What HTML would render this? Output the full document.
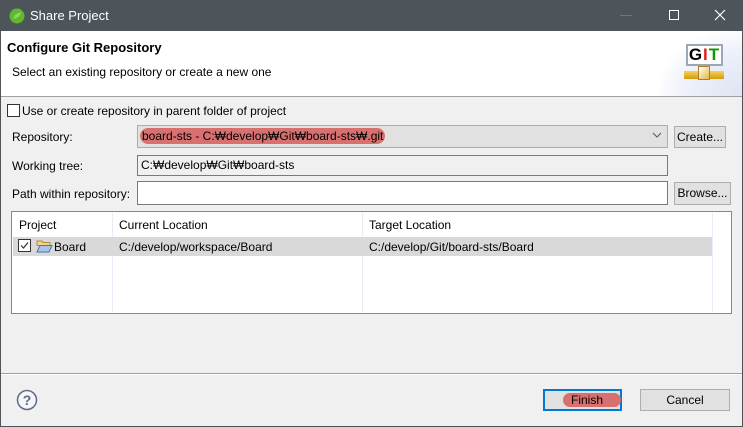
<!DOCTYPE html>
<html><head><meta charset="utf-8"><style>
*{margin:0;padding:0;box-sizing:border-box}
body{width:743px;height:427px;overflow:hidden;background:#f0f0f0;font-family:"Liberation Sans","Noto Sans CJK KR",sans-serif;font-size:12px;color:#000;position:relative}
.a{position:absolute;white-space:nowrap}
.win{position:absolute;left:0;top:0;width:743px;height:427px;border:1px solid #4d545a}
.btn{position:absolute;background:#e1e1e1;border:1px solid #adadad;text-align:center;line-height:20px}
</style></head><body>
<div class="a" style="left:0;top:0;width:743px;height:31px;background:#4d545a"></div>
<svg class="a" style="left:9px;top:8px" width="16" height="16"><circle cx="8" cy="8" r="7.5" fill="#5fb832"/><path d="M4 11 Q6 5 12 4 Q11 10 4 11Z" fill="#8fd65a"/></svg>
<div class="a" style="left:30px;top:8px;color:#fff;font-size:13px">Share Project</div>
<div class="a" style="left:620px;top:15px;width:12px;height:1px;background:#6f777d"></div>
<div class="a" style="left:669px;top:10px;width:10px;height:10px;border:1px solid #fff"></div>
<svg class="a" style="left:714px;top:9px" width="12" height="12"><path d="M1 1L11 11M11 1L1 11" stroke="#fff" stroke-width="1.2"/></svg>
<div class="a" style="left:1px;top:31px;width:741px;height:66px;background:#fff;border-bottom:1px solid #a0a0a0"></div>
<div class="a" style="left:660px;top:31px;width:82px;height:65px;background:radial-gradient(ellipse at 100% 100%,#dfe4f3 0,#eef1fa 50%,#fff 75%)"></div>
<div class="a" style="left:7px;top:40px;font-weight:bold;font-size:13px">Configure Git Repository</div>
<div class="a" style="left:12px;top:65px">Select an existing repository or create a new one</div>
<div class="a" style="left:686px;top:44px;width:37px;height:22px;border:2px solid #9aa7b5;background:#fff;font-weight:bold;font-size:17px;line-height:18px;text-align:center;letter-spacing:1px"><span>G</span><span style="color:#d22">I</span><span style="color:#190">T</span></div>
<div class="a" style="left:684px;top:71px;width:40px;height:8px;background:linear-gradient(#f6d25a,#d49a10)"></div>
<div class="a" style="left:698px;top:66px;width:12px;height:14px;background:linear-gradient(135deg,#fff,#e7b840);border:1px solid #b08020"></div>
<div class="a" style="left:7px;top:104px;width:13px;height:13px;border:1px solid #333;background:#fff"></div>
<div class="a" style="left:22px;top:104px">Use or create repository in parent folder of project</div>
<div class="a" style="left:12px;top:130px">Repository:</div>
<div class="a" style="left:137px;top:125px;width:531px;height:23px;background:#e1e1e1;border:1px solid #adadad"></div>
<div class="a" style="left:140px;top:128px;width:245px;height:16px;background:#d97070;border-radius:8px"></div>
<div class="a" style="left:142px;top:129px">board-sts - C:₩develop₩Git₩board-sts₩.git</div>
<svg class="a" style="left:652px;top:132px" width="10" height="6"><path d="M1 1L5 5L9 1" stroke="#555" fill="none"/></svg>
<div class="btn" style="left:674px;top:126px;width:52px;height:22px">Create...</div>
<div class="a" style="left:12px;top:159px">Working tree:</div>
<div class="a" style="left:137px;top:155px;width:531px;height:21px;background:#f0f0f0;border:1px solid #7a7a7a"></div>
<div class="a" style="left:141px;top:158px">C:₩develop₩Git₩board-sts</div>
<div class="a" style="left:12px;top:187px">Path within repository:</div>
<div class="a" style="left:137px;top:181px;width:531px;height:24px;background:#fff;border:1px solid #7a7a7a"></div>
<div class="btn" style="left:674px;top:182px;width:57px;height:23px">Browse...</div>
<div class="a" style="left:11px;top:211px;width:721px;height:103px;background:#fff;border:1px solid #828790"></div>
<div class="a" style="left:112px;top:213px;width:1px;height:99px;background:#e5ecf6"></div>
<div class="a" style="left:362px;top:213px;width:1px;height:99px;background:#e5ecf6"></div>
<div class="a" style="left:712px;top:213px;width:1px;height:99px;background:#e5ecf6"></div>
<div class="a" style="left:19px;top:218px">Project</div>
<div class="a" style="left:119px;top:218px">Current Location</div>
<div class="a" style="left:369px;top:218px">Target Location</div>
<div class="a" style="left:13px;top:237px;width:699px;height:19px;background:#d9d9d9"></div>
<div class="a" style="left:18px;top:239px;width:13px;height:13px;border:1px solid #333;background:#fff"></div>
<svg class="a" style="left:19px;top:240px" width="11" height="11"><path d="M2 5.5L4.5 8L9 2.5" stroke="#333" fill="none" stroke-width="1.2"/></svg>
<svg class="a" style="left:36px;top:239px" width="17" height="14"><path d="M1 2h5l1 1.5h7v3H1z" fill="#f3d58a" stroke="#b08a3a"/><path d="M1 13L4 6.5h12L13 13z" fill="#a9c4ea" stroke="#4a74b8"/></svg>
<div class="a" style="left:54px;top:240px">Board</div>
<div class="a" style="left:119px;top:240px">C:/develop/workspace/Board</div>
<div class="a" style="left:369px;top:240px">C:/develop/Git/board-sts/Board</div>
<div class="a" style="left:1px;top:373px;width:741px;height:1px;background:#a0a0a0"></div>
<div class="a" style="left:1px;top:374px;width:741px;height:1px;background:#fff"></div>
<svg class="a" style="left:16px;top:389px" width="22" height="22"><circle cx="11" cy="11" r="9.5" fill="#f4f6f9" stroke="#5d6c85" stroke-width="1.5"/><text x="11" y="16" text-anchor="middle" font-family="Liberation Sans" font-weight="bold" font-size="14" fill="#5d6c85">?</text></svg>
<div class="btn" style="left:543px;top:389px;width:79px;height:22px;border:2px solid #0078d7;line-height:18px"></div>
<div class="a" style="left:563px;top:393px;width:58px;height:14px;background:#d97070;border-radius:7px"></div>
<div class="a" style="left:563px;top:393px;width:48px;text-align:center">Finish</div>
<div class="btn" style="left:640px;top:389px;width:90px;height:22px">Cancel</div>
<div class="win"></div>
</body></html>
